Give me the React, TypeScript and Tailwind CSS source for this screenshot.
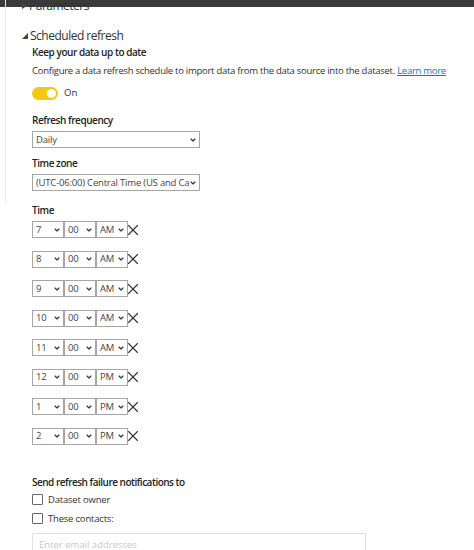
import { ChevronDown, X } from 'lucide-react';

const times = [
  { h: '7', m: '00', p: 'AM' },
  { h: '8', m: '00', p: 'AM' },
  { h: '9', m: '00', p: 'AM' },
  { h: '10', m: '00', p: 'AM' },
  { h: '11', m: '00', p: 'AM' },
  { h: '12', m: '00', p: 'PM' },
  { h: '1', m: '00', p: 'PM' },
  { h: '2', m: '00', p: 'PM' },
];

function Select({ value, className }: { value: string; className: string }) {
  return (
    <div
      className={`flex items-center h-[17px] border border-[#a6a6a6] bg-white pl-[3px] pr-[2px] text-[9.5px] tracking-[-0.2px] text-[#444] ${className}`}
    >
      <span className="flex-1 min-w-0 overflow-x-clip whitespace-nowrap leading-[14px]">{value}</span>
      <ChevronDown size={8} strokeWidth={3.5} className="text-[#333] flex-shrink-0" />
    </div>
  );
}

export default function App() {
  return (
    <div
      className="w-[474px] h-[550px] overflow-hidden bg-white text-[#252423]"
      style={{ fontFamily: '"Open Sans", "Noto Sans", sans-serif' }}
    >
      {/* top bar */}
      <div className="h-[7px] bg-[#3a3a3a]" />

      {/* panel with left rule */}
      <div className="ml-[5px] border-l border-[#e8e8e8] pl-[16px] pb-[12px]">
        <div className="flex items-center h-[14px] -mt-[8px] text-[12px] tracking-[-0.5px] text-[#333]">
          <svg width="5" height="6" viewBox="0 0 5 6" className="mr-[2px]">
            <path d="M0 0 L5 3 L0 6 Z" fill="#444" />
          </svg>
          Parameters
        </div>

        <div className="flex items-center h-[16px] mt-[15px] text-[12px] tracking-[-0.5px] text-[#333]">
          <svg width="6" height="6" viewBox="0 0 6 6" className="mr-[2px]">
            <path d="M6 0 L6 6 L0 6 Z" fill="#444" />
          </svg>
          Scheduled refresh
        </div>

        <div className="pl-[10px]">
          <div className="h-[14px] mt-[1px] flex items-center text-[10px] font-semibold tracking-[-0.45px]">
            Keep your data up to date
          </div>
          <div className="h-[14px] mt-[5px] flex items-center text-[9.5px] tracking-[-0.27px] text-[#333] whitespace-nowrap">
            Configure a data refresh schedule to import data from the data source into the dataset.&nbsp;
            <span className="text-[#0078d4] underline">Learn more</span>
          </div>

          <div className="h-[14px] mt-[8px] flex items-center gap-[6px]">
            <div className="w-[26px] h-[13px] rounded-full bg-[#f2c811] flex items-center justify-end pr-[2px]">
              <div className="w-[9px] h-[9px] rounded-full bg-white" />
            </div>
            <span className="text-[9.5px] text-[#333]">On</span>
          </div>

          <div className="h-[14px] mt-[13px] flex items-center text-[10px] font-semibold tracking-[-0.45px]">
            Refresh frequency
          </div>
          <Select value="Daily" className="w-[168px] mt-[4px]" />

          <div className="h-[14px] mt-[8px] flex items-center text-[10px] font-semibold tracking-[-0.45px]">
            Time zone
          </div>
          <Select value="(UTC-06:00) Central Time (US and Ca" className="w-[168px] mt-[4px]" />
        </div>
      </div>

      {/* times and notifications */}
      <div className="pl-[32px]">
        <div className="h-[14px] flex items-center text-[10px] font-semibold tracking-[-0.45px]">Time</div>
        <div className="flex flex-col gap-[12.57px] mt-[4px]">
          {times.map((t, i) => (
            <div key={i} className="flex items-center h-[17px]">
              <Select value={t.h} className="w-[32px]" />
              <Select value={t.m} className="w-[32px]" />
              <Select value={t.p} className="w-[32px]" />
              <X size={18} strokeWidth={1.5} className="text-[#333] -ml-[4px] flex-shrink-0" />
            </div>
          ))}
        </div>

        <div className="h-[14px] mt-[31px] flex items-center text-[10px] font-semibold tracking-[-0.5px]">
          Send refresh failure notifications to
        </div>
        <label className="h-[14px] mt-[3px] flex items-center gap-[5px] text-[9.5px] tracking-[-0.2px] text-[#333]">
          <span className="w-[11px] h-[11px] border border-[#666] rounded-[1px] bg-white" />
          Dataset owner
        </label>
        <label className="h-[14px] mt-[5px] flex items-center gap-[5px] text-[9.5px] tracking-[-0.2px] text-[#333]">
          <span className="w-[11px] h-[11px] border border-[#666] rounded-[1px] bg-white" />
          These contacts:
        </label>
        <div className="w-[334px] h-[24px] mt-[7px] border border-[#e1e1e1] flex items-center pl-[6px] text-[9.5px] text-[#c8c8c8]">
          Enter email addresses
        </div>
      </div>
    </div>
  );
}
